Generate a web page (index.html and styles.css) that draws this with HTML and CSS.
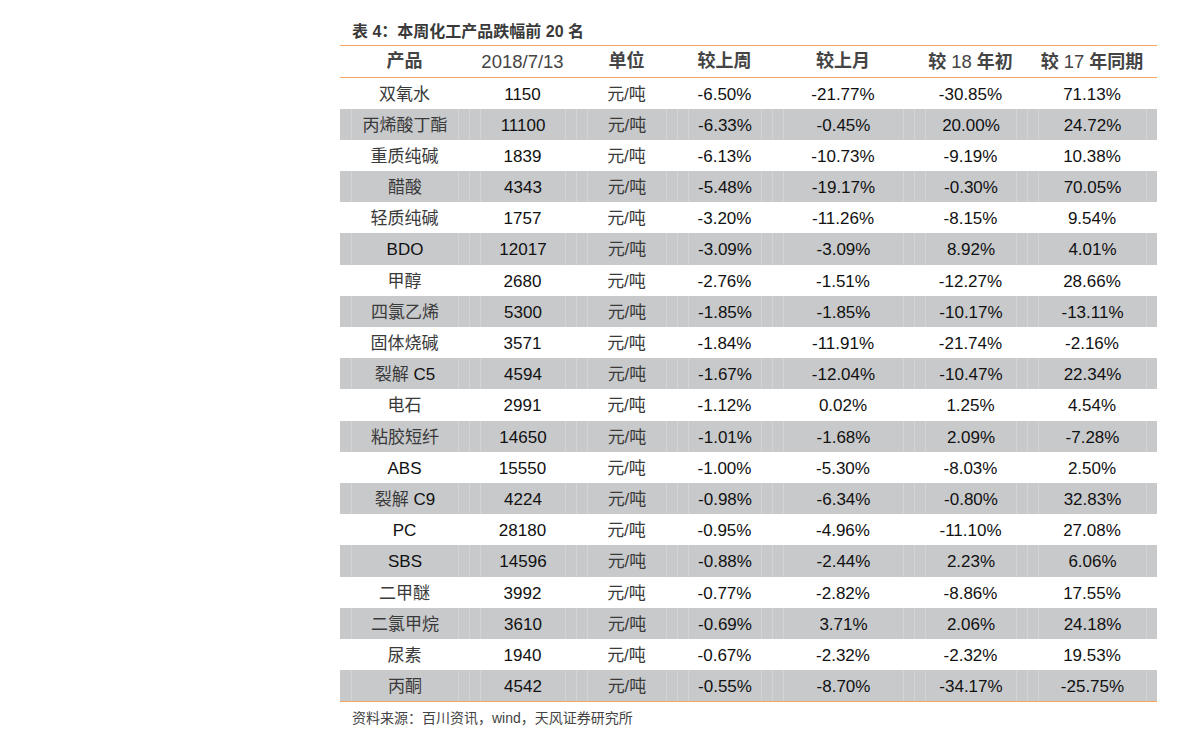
FILE: index.html
```html
<!DOCTYPE html>
<html lang="zh-CN">
<head>
<meta charset="utf-8">
<title>表 4：本周化工产品跌幅前 20 名</title>
<link rel="stylesheet" href="styles.css">
</head>
<body>
<div class="page">
  <div class="title">表 4：本周化工产品跌幅前 20 名</div>
  <div class="table">
    <div class="row head">
      <div class="cell"><span class="cjk">产品</span></div>
      <div class="cell"><span class="num">2018/7/13</span></div>
      <div class="cell"><span class="cjk">单位</span></div>
      <div class="cell"><span class="cjk">较上周</span></div>
      <div class="cell"><span class="cjk">较上月</span></div>
      <div class="cell"><span class="cjk">较 <span class="num">18</span> 年初</span></div>
      <div class="cell"><span class="cjk">较 <span class="num">17</span> 年同期</span></div>
    </div>
    <div class="body">
      <div class="row"><div class="cell name">双氧水</div><div class="cell">1150</div><div class="cell unit">元/吨</div><div class="cell">-6.50%</div><div class="cell">-21.77%</div><div class="cell">-30.85%</div><div class="cell">71.13%</div></div>
      <div class="row shade"><div class="cell name">丙烯酸丁酯</div><div class="cell">11100</div><div class="cell unit">元/吨</div><div class="cell">-6.33%</div><div class="cell">-0.45%</div><div class="cell">20.00%</div><div class="cell">24.72%</div></div>
      <div class="row"><div class="cell name">重质纯碱</div><div class="cell">1839</div><div class="cell unit">元/吨</div><div class="cell">-6.13%</div><div class="cell">-10.73%</div><div class="cell">-9.19%</div><div class="cell">10.38%</div></div>
      <div class="row shade"><div class="cell name">醋酸</div><div class="cell">4343</div><div class="cell unit">元/吨</div><div class="cell">-5.48%</div><div class="cell">-19.17%</div><div class="cell">-0.30%</div><div class="cell">70.05%</div></div>
      <div class="row"><div class="cell name">轻质纯碱</div><div class="cell">1757</div><div class="cell unit">元/吨</div><div class="cell">-3.20%</div><div class="cell">-11.26%</div><div class="cell">-8.15%</div><div class="cell">9.54%</div></div>
      <div class="row shade"><div class="cell name lat">BDO</div><div class="cell">12017</div><div class="cell unit">元/吨</div><div class="cell">-3.09%</div><div class="cell">-3.09%</div><div class="cell">8.92%</div><div class="cell">4.01%</div></div>
      <div class="row"><div class="cell name">甲醇</div><div class="cell">2680</div><div class="cell unit">元/吨</div><div class="cell">-2.76%</div><div class="cell">-1.51%</div><div class="cell">-12.27%</div><div class="cell">28.66%</div></div>
      <div class="row shade"><div class="cell name">四氯乙烯</div><div class="cell">5300</div><div class="cell unit">元/吨</div><div class="cell">-1.85%</div><div class="cell">-1.85%</div><div class="cell">-10.17%</div><div class="cell">-13.11%</div></div>
      <div class="row"><div class="cell name">固体烧碱</div><div class="cell">3571</div><div class="cell unit">元/吨</div><div class="cell">-1.84%</div><div class="cell">-11.91%</div><div class="cell">-21.74%</div><div class="cell">-2.16%</div></div>
      <div class="row shade"><div class="cell name">裂解 <span class="lat">C5</span></div><div class="cell">4594</div><div class="cell unit">元/吨</div><div class="cell">-1.67%</div><div class="cell">-12.04%</div><div class="cell">-10.47%</div><div class="cell">22.34%</div></div>
      <div class="row"><div class="cell name">电石</div><div class="cell">2991</div><div class="cell unit">元/吨</div><div class="cell">-1.12%</div><div class="cell">0.02%</div><div class="cell">1.25%</div><div class="cell">4.54%</div></div>
      <div class="row shade"><div class="cell name">粘胶短纤</div><div class="cell">14650</div><div class="cell unit">元/吨</div><div class="cell">-1.01%</div><div class="cell">-1.68%</div><div class="cell">2.09%</div><div class="cell">-7.28%</div></div>
      <div class="row"><div class="cell name lat">ABS</div><div class="cell">15550</div><div class="cell unit">元/吨</div><div class="cell">-1.00%</div><div class="cell">-5.30%</div><div class="cell">-8.03%</div><div class="cell">2.50%</div></div>
      <div class="row shade"><div class="cell name">裂解 <span class="lat">C9</span></div><div class="cell">4224</div><div class="cell unit">元/吨</div><div class="cell">-0.98%</div><div class="cell">-6.34%</div><div class="cell">-0.80%</div><div class="cell">32.83%</div></div>
      <div class="row"><div class="cell name lat">PC</div><div class="cell">28180</div><div class="cell unit">元/吨</div><div class="cell">-0.95%</div><div class="cell">-4.96%</div><div class="cell">-11.10%</div><div class="cell">27.08%</div></div>
      <div class="row shade"><div class="cell name lat">SBS</div><div class="cell">14596</div><div class="cell unit">元/吨</div><div class="cell">-0.88%</div><div class="cell">-2.44%</div><div class="cell">2.23%</div><div class="cell">6.06%</div></div>
      <div class="row"><div class="cell name">二甲醚</div><div class="cell">3992</div><div class="cell unit">元/吨</div><div class="cell">-0.77%</div><div class="cell">-2.82%</div><div class="cell">-8.86%</div><div class="cell">17.55%</div></div>
      <div class="row shade"><div class="cell name">二氯甲烷</div><div class="cell">3610</div><div class="cell unit">元/吨</div><div class="cell">-0.69%</div><div class="cell">3.71%</div><div class="cell">2.06%</div><div class="cell">24.18%</div></div>
      <div class="row"><div class="cell name">尿素</div><div class="cell">1940</div><div class="cell unit">元/吨</div><div class="cell">-0.67%</div><div class="cell">-2.32%</div><div class="cell">-2.32%</div><div class="cell">19.53%</div></div>
      <div class="row shade"><div class="cell name">丙酮</div><div class="cell">4542</div><div class="cell unit">元/吨</div><div class="cell">-0.55%</div><div class="cell">-8.70%</div><div class="cell">-34.17%</div><div class="cell">-25.75%</div></div>
    </div>
  </div>
  <div class="source">资料来源：百川资讯，wind，天风证券研究所</div>
</div>
</body>
</html>
```
FILE: styles.css
```css
html, body {
  margin: 0;
  padding: 0;
  background: #ffffff;
}

.page {
  padding: 20px 0 0 340px;
  width: 817px;
  font-family: "Liberation Sans", "Noto Sans CJK SC", sans-serif;
}

.title {
  padding-left: 12px;
  font-family: "Liberation Sans", "Noto Sans CJK SC", sans-serif;
  font-size: 16px;
  font-weight: 700;
  line-height: 24px;
  color: #3a3a3a;
  height: 24px;
  margin-bottom: 1px;
}

.table {
  width: 817px;
  border-top: 1.5px solid #f3a462;
  border-bottom: 1.5px solid #f3a462;
}

.row {
  display: grid;
  grid-template-columns: 129px 107px 101px 95px 142px 113px 130px;
  height: 31.2px;
}

.row.head {
  height: 30.5px;
  border-bottom: 1.5px solid #f3a462;
}

.cell {
  box-sizing: border-box;
  padding-top: 2px;
  text-align: center;
  white-space: nowrap;
  font-family: "Liberation Sans", "Noto Sans CJK SC", sans-serif;
  font-size: 17px;
  line-height: 29.2px;
  color: #111111;
}

.head .cell {
  padding-top: 1px;
  font-size: 18px;
  line-height: 29.5px;
  color: #444444;
}

.head .cjk {
  font-family: "Liberation Sans", "Noto Sans CJK SC", sans-serif;
  font-weight: 700;
}

.head .num {
  font-size: 18.5px;
  font-weight: 400;
}

.cell.name,
.cell.unit {
  color: #3a3a3a;
}

.cell.lat,
.lat {
  color: #111111;
}

.row.shade {
  background-color: #c8c9cb;
}

.row.shade .cell {
  border-left: 1px solid #d3d4d6;
  background-image: linear-gradient(to right,
    transparent 10px, #d3d4d6 10px, #d3d4d6 11px, transparent 11px,
    transparent calc(100% - 11px), #d3d4d6 calc(100% - 11px), #d3d4d6 calc(100% - 10px), transparent calc(100% - 10px));
}

.row.shade .cell:first-child {
  border-left-color: transparent;
}

.source {
  padding-left: 12px;
  margin-top: 6px;
  font-family: "Liberation Sans", "Noto Sans CJK SC", sans-serif;
  font-size: 14px;
  line-height: 20px;
  color: #444444;
}
```
